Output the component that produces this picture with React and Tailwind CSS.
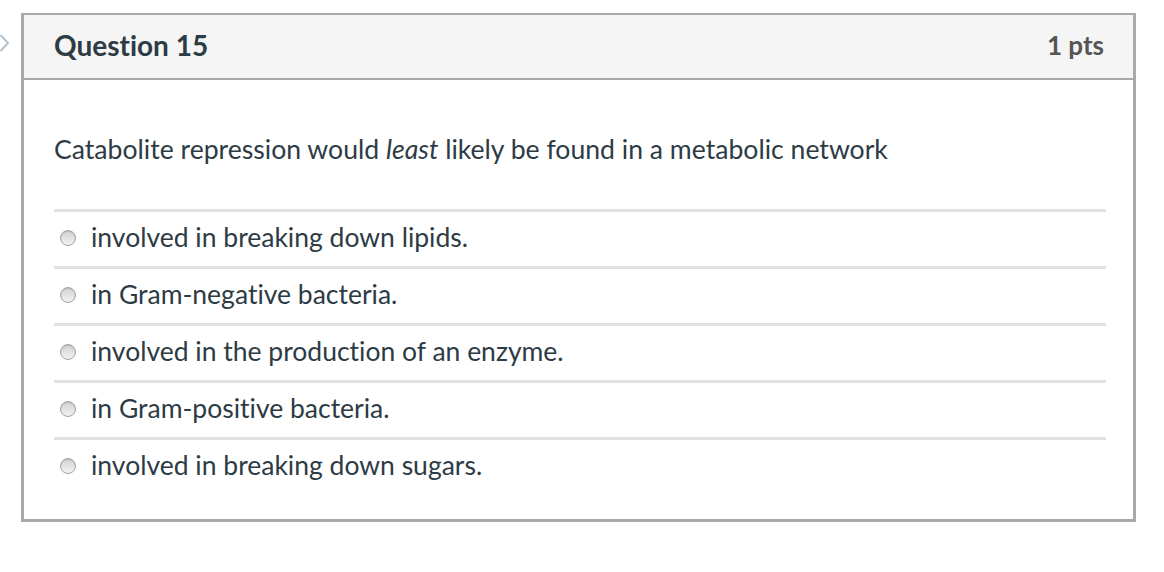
const answers = [
  "involved in breaking down lipids.",
  "in Gram-negative bacteria.",
  "involved in the production of an enzyme.",
  "in Gram-positive bacteria.",
  "involved in breaking down sugars.",
];

function Radio() {
  return (
    <span className="block h-[16px] w-[16px] shrink-0 rounded-full border border-[#a3a3a3] bg-gradient-to-b from-[#d2d2d2] to-[#f2f2f2] shadow-[inset_0_1px_1px_rgba(0,0,0,0.12)]" />
  );
}

export default function App() {
  return (
    <div className="relative h-[572px] bg-white pl-[21px] pr-[28px] pt-[13px] font-['Lato','Liberation_Sans',sans-serif] text-[#2d3b45] [font-variant-ligatures:none]">
      <svg className="absolute left-0 top-[34px]" width="10" height="18" viewBox="0 0 10 18">
        <polyline points="0.5,1 8,9 0.5,17" fill="none" stroke="#b3c3cf" strokeWidth="2" />
      </svg>

      <div className="border-x-[3px] border-b-[3px] border-t-2 border-[#a9a9a9]">
        <div className="flex h-[65px] items-center justify-between border-b-2 border-[#a9a9a9] bg-[#f5f5f5] pb-[3px] pl-[30px] pr-[29px]">
          <h2 className="text-[28px] font-bold leading-none">Question 15</h2>
          <span className="text-[26px] font-bold leading-none text-[#555555]">1 pts</span>
        </div>

        <div className="pb-[25px] pl-[30px] pr-[27px] pt-[51px]">
          <p className="text-[26.6px] leading-[36px]">
            Catabolite repression would <em>least</em> likely be found in a metabolic network
          </p>

          <ul className="mt-[42px]">
            {answers.map((answer) => (
              <li key={answer} className="flex h-[57px] items-center gap-[15px] border-t-[3px] border-[#e2e2e2] pb-[3px] pl-[6px]">
                <Radio />
                <span className="text-[26.5px] leading-none">{answer}</span>
              </li>
            ))}
          </ul>
        </div>
      </div>
    </div>
  );
}
